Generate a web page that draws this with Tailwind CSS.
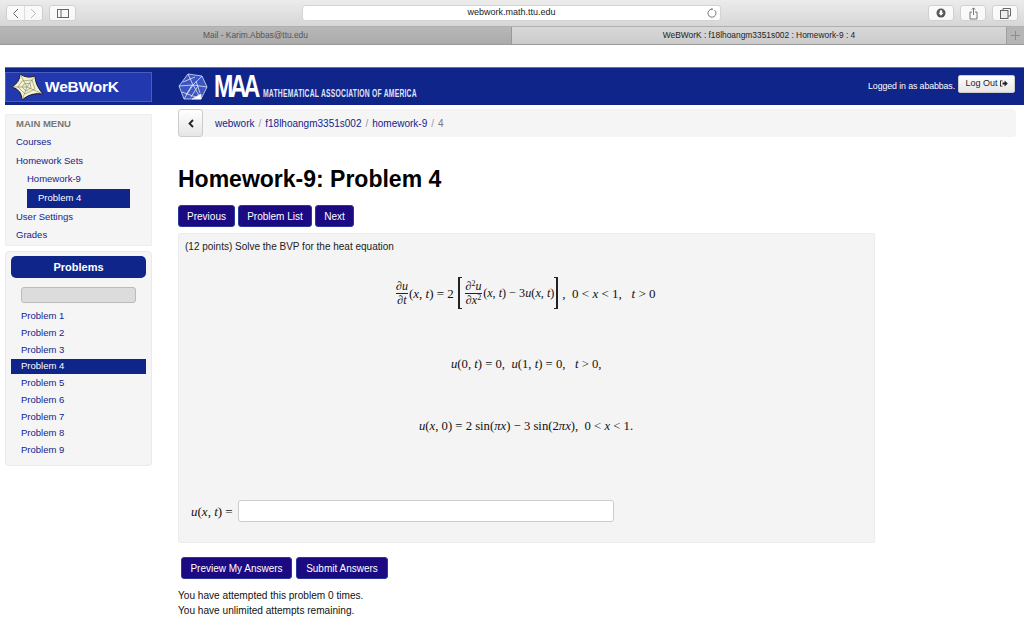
<!DOCTYPE html>
<html lang="en">
<head>
    <meta charset="UTF-8">
    <title>WeBWorK : f18lhoangm3351s002 : Homework-9 : 4</title>
    <script src="https://cdn.jsdelivr.net/npm/@tailwindcss/browser@4"></script>
</head>
<body class="bg-white w-[1024px] h-[640px] overflow-hidden font-['Liberation_Sans',sans-serif] text-[10px] text-[#111]">
    <!-- Safari toolbar -->
    <div class="h-[27px] bg-gradient-to-b from-[#ececec] to-[#d6d6d6] border-b border-[#b0b0b0] flex items-center pl-[6px] pr-[6px]">
        <div class="flex w-[37px] h-[16px] bg-white/80 rounded-[3px] border border-[#d0d0d0]">
            <div class="w-[18px] flex items-center justify-center border-r border-[#ddd]">
                <svg width="7" height="11" viewBox="0 0 7 11" fill="none" stroke="#666" stroke-width="1"><path d="M6 1L1.5 5.5L6 10"/></svg>
            </div>
            <div class="flex-1 flex items-center justify-center">
                <svg width="7" height="11" viewBox="0 0 7 11" fill="none" stroke="#bbb" stroke-width="1"><path d="M1 1L5.5 5.5L1 10"/></svg>
            </div>
        </div>
        <div class="ml-[6px] w-[27px] h-[16px] bg-white/80 rounded-[3px] border border-[#d0d0d0] flex items-center justify-center">
            <svg width="12" height="9" viewBox="0 0 12 9" fill="none" stroke="#666" stroke-width="1"><rect x=".5" y=".5" width="11" height="8"/><path d="M4 .5V8.5"/></svg>
        </div>
        <div class="ml-[226px] w-[419px] h-[16px] bg-white rounded-[3px] border border-[#d4d4d4] relative flex items-center justify-center text-[9px] text-[#222]">
            webwork.math.ttu.edu
            <svg class="absolute right-[2px] top-[1px]" width="12" height="12" viewBox="0 0 12 12" fill="none" stroke="#777" stroke-width="1"><path d="M8.6 3.2A4 4 0 1 1 6 2.2"/><path d="M5.5 .8L7.3 2.2L5.5 3.6" fill="#777" stroke="none"/></svg>
        </div>
        <div class="ml-auto flex gap-[6px]">
            <div class="w-[26px] h-[16px] bg-white/80 rounded-[3px] border border-[#d0d0d0] flex items-center justify-center">
                <svg width="10" height="10" viewBox="0 0 10 10"><circle cx="5" cy="5" r="4.5" fill="#555"/><path d="M3.8 2.2H6.2V4.8H7.6L5 7.8L2.4 4.8H3.8Z" fill="#fff"/></svg>
            </div>
            <div class="w-[26px] h-[16px] bg-white/80 rounded-[3px] border border-[#d0d0d0] flex items-center justify-center">
                <svg width="9" height="13" viewBox="0 0 9 13" fill="none" stroke="#666" stroke-width=".9"><path d="M3 5H1V12H8V5H6"/><path d="M4.5 8V1M2.8 2.6L4.5 .9L6.2 2.6"/></svg>
            </div>
            <div class="w-[26px] h-[16px] bg-white/80 rounded-[3px] border border-[#d0d0d0] flex items-center justify-center">
                <svg width="11" height="11" viewBox="0 0 11 11" fill="none" stroke="#666" stroke-width="1"><rect x=".5" y="2.5" width="7.5" height="8" fill="#eee"/><path d="M3 2.5V.5H10.5V8H8"/></svg>
            </div>
        </div>
    </div>

    <!-- Tabs -->
    <div class="h-[18px] flex border-b border-[#9a9a9a] text-[8.4px]">
        <div class="w-[512px] bg-gradient-to-b from-[#b8b8b8] to-[#aaa] border-r border-[#999] flex items-center justify-center text-[#555]">Mail - Karim.Abbas@ttu.edu</div>
        <div class="flex-1 bg-gradient-to-b from-[#d8d8d8] to-[#cbcbcb] flex items-center justify-center text-[#222]">WeBWorK : f18lhoangm3351s002 : Homework-9 : 4</div>
        <div class="w-[18px] bg-[#b5b5b5] border-l border-[#a0a0a0] flex items-center justify-center">
            <svg width="9" height="9" viewBox="0 0 9 9" stroke="#8c8c8c" stroke-width="1"><path d="M4.5 0V9M0 4.5H9"/></svg>
        </div>
    </div>

    <!-- Header band -->
    <div class="mt-[22px] ml-[5px] h-[38px] bg-[#0f258a] border-t border-[#5f6fb8] flex items-center text-white">
        <div class="w-[147px] h-[30px] bg-[#2238ae] border border-[#4a5cc0] flex items-center shrink-0">
            <svg class="ml-[6px]" width="31" height="26" viewBox="0 0 31 26">
                <path d="M8 0Q15 5 23 2Q23 11 31 20Q19 18 10 26Q10 16 0 13Q8 8 8 0Z" fill="#f3f1cf" stroke="#1a1a2a" stroke-width="1"/>
                <path d="M8 0L15 13L23 2M15 13L31 20M15 13L10 26M15 13L0 13M10 7L20 6L23 15L13 20L6 13ZM12 10L18 9L19 14L14 17L10 13Z" fill="none" stroke="#6b6b55" stroke-width=".5"/>
            </svg>
            <span class="ml-[2px] text-[15.5px] font-bold tracking-[-0.2px]">WeBWorK</span>
        </div>
        <div class="ml-[26px] flex items-center">
            <svg width="30" height="28" viewBox="0 0 30 28" fill="none" stroke="#dfe4f7" stroke-width=".8">
                <path d="M10 1L24 3L29 14L23 26L6 26L1 13Z" fill="#3d55c0"/>
                <path d="M10 1L15 12L1 13M15 12L24 3M15 12L29 14M15 12L23 26M15 12L6 26M4 19L23 26M8 22L14 12M18 8L22 20M17 4L5 9M20 13L13 24"/>
                <path d="M14 26L23 21L23 26Z" fill="#fff"/>
            </svg>
            <span class="ml-[6px] w-[49px] text-[31px] font-bold leading-none tracking-[-4.5px] scale-x-[0.75] origin-left">MAA</span>
            <span class="w-[153px] mt-[13px] text-[10px] font-bold tracking-[0.3px] whitespace-nowrap scale-x-[0.68] origin-left text-[#dfe3f5]">MATHEMATICAL ASSOCIATION OF AMERICA</span>
        </div>
        <div class="ml-auto flex items-center">
            <span class="text-[8.8px] tracking-[-0.1px]">Logged in as ababbas.</span>
            <div class="ml-[3px] mr-[9px] mb-[6px] w-[57px] h-[18px] bg-gradient-to-b from-white to-[#e6e6e6] border border-[#ccc] rounded-[2px] text-[#222] text-[9px] flex items-center justify-center gap-[2px]">
                Log Out
                <svg width="8" height="7" viewBox="0 0 8 7" fill="#222"><path d="M0 .5H2.5V1.3H.9V5.7H2.5V6.5H0Z"/><path d="M2.5 2.4H4.6V.6L7.8 3.5L4.6 6.4V4.6H2.5Z"/></svg>
            </div>
        </div>
    </div>

    <div class="flex">
        <!-- Sidebar -->
        <div class="ml-[5px] w-[147px] shrink-0 pt-[9px]">
            <div class="h-[132px] bg-[#f5f5f5] border border-[#eee] text-[#14238a] text-[9.5px]">
                <div class="h-[18px] leading-[18px] pl-[10px] font-bold text-[#777]">MAIN MENU</div>
                <div class="h-[18.5px] leading-[18px] pl-[10px]">Courses</div>
                <div class="h-[18.5px] leading-[18px] pl-[10px]">Homework Sets</div>
                <div class="h-[18.5px] leading-[18px] pl-[21px]">Homework-9</div>
                <div class="h-[19px] leading-[18px] ml-[21px] w-[103px] pl-[11px] bg-[#0f258a] text-white">Problem 4</div>
                <div class="h-[18.5px] leading-[18px] pl-[10px]">User Settings</div>
                <div class="h-[18.5px] leading-[18px] pl-[10px]">Grades</div>
            </div>
            <div class="mt-[5px] h-[215px] bg-[#f5f5f5] border border-[#eaeaea] rounded-[4px] px-[5px] pt-[4px]">
                <div class="h-[22px] bg-[#0f258a] rounded-[5px] text-white font-bold text-[11px] flex items-center justify-center">Problems</div>
                <div class="mx-[10px] mt-[9px] h-[16px] bg-[#dcdcdc] border border-[#bbb] rounded-[3px]"></div>
                <div class="mt-[5px] text-[9.5px] text-[#14238a]">
                    <div class="h-[16.75px] leading-[16px] pl-[10px]">Problem 1</div>
                    <div class="h-[16.75px] leading-[16px] pl-[10px]">Problem 2</div>
                    <div class="h-[16.75px] leading-[16px] pl-[10px]">Problem 3</div>
                    <div class="h-[15px] leading-[14px] pl-[10px] my-[0.875px] bg-[#0f258a] text-white">Problem 4</div>
                    <div class="h-[16.75px] leading-[16px] pl-[10px]">Problem 5</div>
                    <div class="h-[16.75px] leading-[16px] pl-[10px]">Problem 6</div>
                    <div class="h-[16.75px] leading-[16px] pl-[10px]">Problem 7</div>
                    <div class="h-[16.75px] leading-[16px] pl-[10px]">Problem 8</div>
                    <div class="h-[16.75px] leading-[16px] pl-[10px]">Problem 9</div>
                </div>
            </div>
        </div>

        <!-- Main content -->
        <div class="ml-[26px] flex-1 pr-[8px] pt-[4px]">
            <div class="flex items-stretch h-[28px]">
                <div class="w-[25px] bg-gradient-to-b from-white to-[#e6e6e6] border border-[#ccc] rounded-[3px] flex items-center justify-center z-10">
                    <svg width="6" height="9" viewBox="0 0 6 9" fill="none" stroke="#222" stroke-width="1.8"><path d="M5 1L1.5 4.5L5 8"/></svg>
                </div>
                <div class="flex-1 ml-[-1px] bg-[#f5f5f5] rounded-r-[4px] pl-[13px] flex items-center text-[10px] text-[#999] gap-[4px]">
                    <span class="text-[#14238a]">webwork</span>/<span class="text-[#14238a]">f18lhoangm3351s002</span>/<span class="text-[#14238a]">homework-9</span>/<span class="text-[#777]">4</span>
                </div>
            </div>
            <h1 class="mt-[24px] h-[36px] leading-[36px] text-[23px] font-bold text-black">Homework-9: Problem 4</h1>
            <div class="mt-[8px] flex gap-[3px]">
                <div class="h-[22px] w-[57px] bg-[#1b0a82] border border-[#2a3a9c] rounded-[3px] text-white text-[10px] flex items-center justify-center">Previous</div>
                <div class="h-[22px] w-[74px] bg-[#1b0a82] border border-[#2a3a9c] rounded-[3px] text-white text-[10px] flex items-center justify-center">Problem List</div>
                <div class="h-[22px] w-[39px] bg-[#1b0a82] border border-[#2a3a9c] rounded-[3px] text-white text-[10px] flex items-center justify-center">Next</div>
            </div>

            <!-- Problem box -->
            <div class="mt-[6px] w-[697px] h-[310px] bg-[#f4f4f4] border border-[#ececec] rounded-[2px] pt-[6px] pl-[6px] text-[#222]">
                <p class="h-[14px] leading-[14px] text-[10px]">(12 points) Solve the BVP for the heat equation</p>
                <div class="font-['Liberation_Serif',serif] text-[13px] text-[#111] leading-none">
                    <div class="mt-[21px] h-[36px] ml-[211px] flex items-center whitespace-nowrap">
                        <span class="flex flex-col items-center text-[12px] italic mr-[1px]"><span class="leading-[14px]">∂u</span><span class="border-t border-[#222] leading-[13px] px-[1px]">∂t</span></span>
                        <span>(<i>x</i>, <i>t</i>) = 2</span>
                        <span class="ml-[4px] w-[4px] h-[32px] border-l-2 border-y border-[#222]"></span>
                        <span class="flex flex-col items-center text-[12px] italic ml-[3px] mr-[1px]"><span class="leading-[14px]">∂<sup class="text-[8px] not-italic">2</sup>u</span><span class="border-t border-[#222] leading-[13px] px-[1px]">∂x<sup class="text-[8px] not-italic">2</sup></span></span>
                        <span class="text-[12.2px]">(<i>x</i>, <i>t</i>) − 3<i>u</i>(<i>x</i>, <i>t</i>)</span>
                        <span class="w-[4px] h-[32px] border-r-2 border-y border-[#222]"></span>
                        <span class="ml-[4px]">,&nbsp;&nbsp;0 &lt; <i>x</i> &lt; 1,&nbsp;&nbsp;&nbsp;<i>t</i> &gt; 0</span>
                    </div>
                    <div class="mt-[47px] h-[14px] ml-[266px] text-[12.7px] whitespace-nowrap"><i>u</i>(0, <i>t</i>) = 0,&nbsp;&nbsp;<i>u</i>(1, <i>t</i>) = 0,&nbsp;&nbsp;&nbsp;<i>t</i> &gt; 0,</div>
                    <div class="mt-[48px] h-[14px] ml-[234px] text-[12.7px] whitespace-nowrap"><i>u</i>(<i>x</i>, 0) = 2 sin(<i>πx</i>) − 3 sin(2<i>πx</i>),&nbsp;&nbsp;0 &lt; <i>x</i> &lt; 1.</div>
                    <div class="mt-[66px] ml-[6px] flex items-center h-[22px] whitespace-nowrap">
                        <span><i>u</i>(<i>x</i>, <i>t</i>) =</span>
                        <div class="ml-[5px] w-[376px] h-[22px] bg-white border border-[#ccc] rounded-[3px]"></div>
                    </div>
                </div>
            </div>

            <div class="mt-[14px] ml-[3px] flex gap-[4px]">
                <div class="h-[22px] w-[111px] bg-[#1b0a82] border border-[#2a3a9c] rounded-[3px] text-white text-[10px] flex items-center justify-center">Preview My Answers</div>
                <div class="h-[22px] w-[92px] bg-[#1b0a82] border border-[#2a3a9c] rounded-[3px] text-white text-[10px] flex items-center justify-center">Submit Answers</div>
            </div>
            <p class="mt-[9px] leading-[15px] text-[10.1px] text-[#111]">You have attempted this problem 0 times.<br>You have unlimited attempts remaining.</p>
        </div>
    </div>
</body>
</html>
